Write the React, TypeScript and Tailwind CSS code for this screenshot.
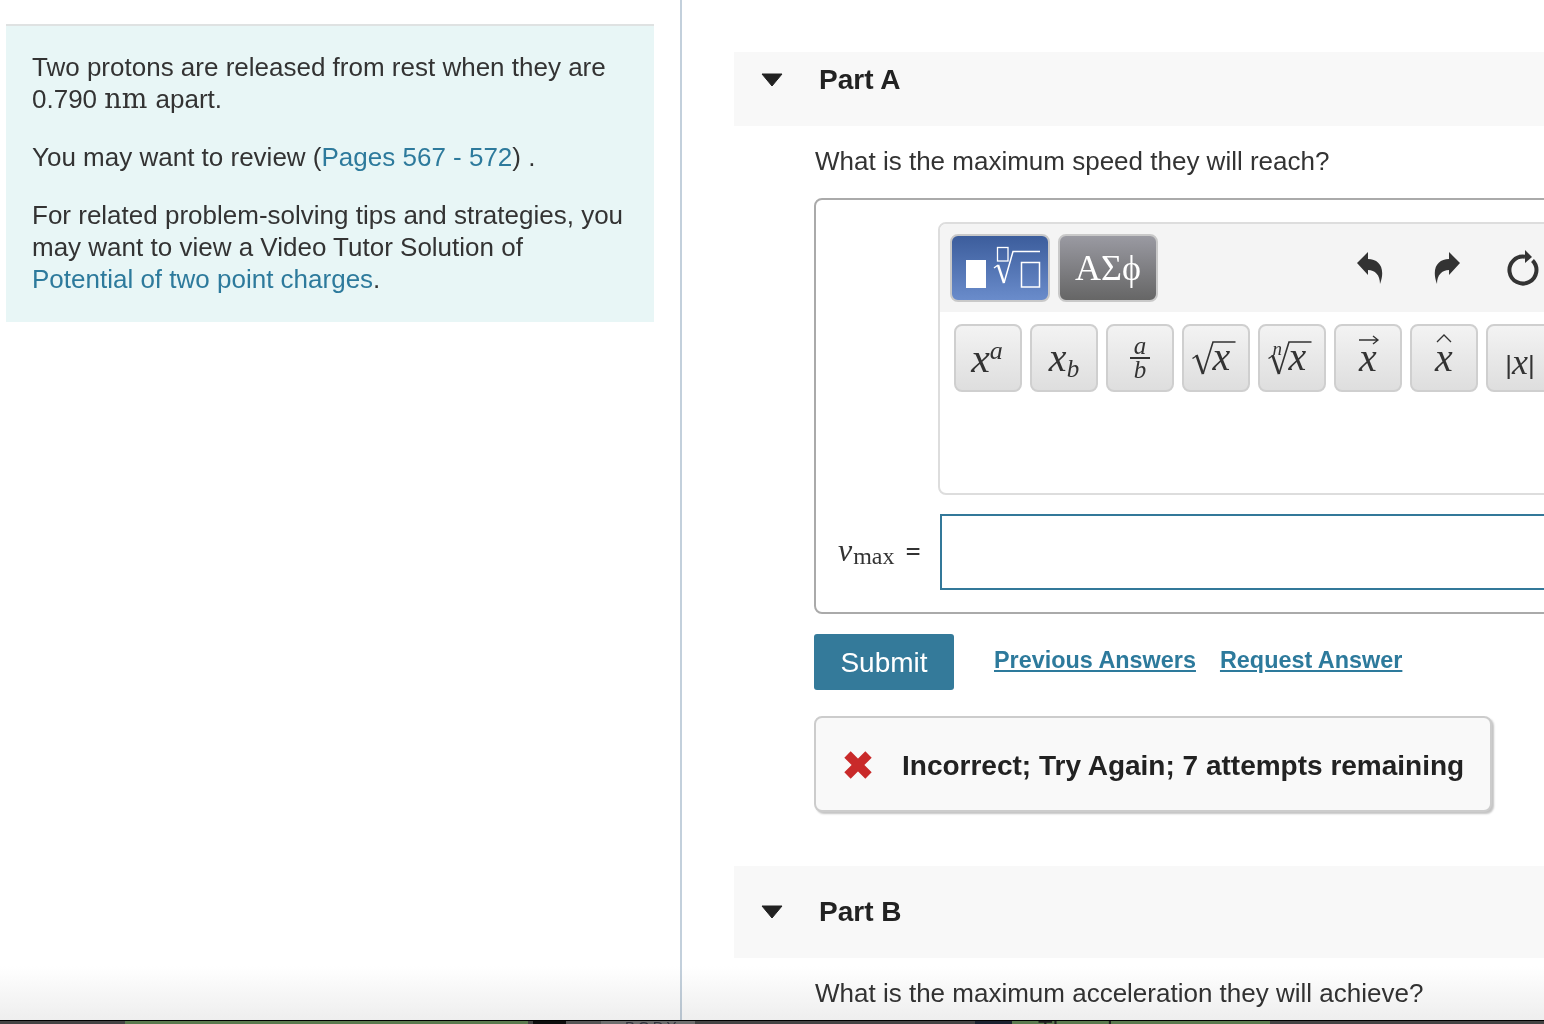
import * as React from "react";

const sans = "font-['Liberation_Sans',Arial,sans-serif]";
const serif = "font-['Liberation_Serif','Times_New_Roman',serif]";

function MathButton({ children }: { children: React.ReactNode }) {
  return (
    <div className={`relative flex h-[68px] w-[68px] shrink-0 items-center justify-center rounded-lg border-2 border-[#cfcfcf] bg-gradient-to-b from-[#f3f3f3] to-[#dedede] text-[#333] ${serif} italic`}>
      {children}
    </div>
  );
}

function Radical({ index }: { index?: boolean }) {
  return (
    <span className="relative mr-[5px] block h-[36px] w-[44px] text-[40px] leading-none">
      {index && <span className="absolute left-[5px] top-[-1px] text-[19px]">n</span>}
      <svg className="absolute left-0 top-0" width="44" height="36" viewBox="0 0 44 36" fill="none" stroke="#333">
        <path d="M0.5 18.5 L5 15.5" strokeWidth="1.3" />
        <path d="M4.5 15 L11 34" strokeWidth="2.6" />
        <path d="M11 34 L21 2 H43.5" strokeWidth="1.6" />
      </svg>
      <span className="absolute left-[21px] top-[-3px]">x</span>
    </span>
  );
}

function Collapse() {
  return (
    <svg width="22" height="14" viewBox="0 0 22 14" className="shrink-0">
      <path d="M1 1 H21 L11 13 Z" fill="#222" stroke="#222" strokeLinejoin="round" />
    </svg>
  );
}

function PartHeader({ title, className }: { title: string; className: string }) {
  return (
    <div className={`flex items-center gap-[36px] bg-[#f8f8f8] pl-[27px] ${className}`}>
      <Collapse />
      <span className="text-[28px] font-bold text-[#222]">{title}</span>
    </div>
  );
}

export default function App() {
  return (
    <div className={`relative flex h-[1024px] w-[1544px] overflow-hidden bg-white ${sans}`}>
      {/* left column */}
      <div className="h-full w-[682px] shrink-0 border-r-2 border-[#c3d0dc] pl-1.5 pt-6">
        <div className="w-[648px] border-t-2 border-[#dfe2e2] bg-[#e8f6f6] px-[26px] pb-[27px] pt-[25px] text-[26px] leading-8 text-[#333]">
          <p>
            Two protons are released from rest when they are
            <br />
            0.790 <span className="mr-px font-['DejaVu_Serif',serif] text-[27px] leading-none">nm</span> apart.
          </p>
          <p className="mt-[26px]">
            You may want to review (<span className="text-[#2d7a9c]">Pages 567 - 572</span>) .
          </p>
          <p className="mt-[26px]">
            For related problem-solving tips and strategies, you
            <br />
            may want to view a Video Tutor Solution of
            <br />
            <span className="text-[#2d7a9c]">Potential of two point charges</span>.
          </p>
        </div>
      </div>

      {/* right column */}
      <div className="min-w-0 flex-1 overflow-hidden pl-[52px] pt-[52px]">
        <PartHeader title="Part A" className="h-[74px] pb-[18px]" />
        <div className="w-[1000px] pl-[80px]">
          <p className="ml-px mt-[19px] text-[26px] leading-8 text-[#333]">What is the maximum speed they will reach?</p>

          <div className="mt-[21px] h-[416px] rounded-lg border-2 border-[#aaa] pl-[122px] pt-[22px]">
            <div className="h-[273px] overflow-hidden rounded-lg border-2 border-[#ddd]">
              <div className="flex h-[88px] items-center bg-[#f4f4f4] pl-[10px]">
                <div className="flex h-[68px] w-[100px] items-center justify-center rounded-lg border-2 border-[#c9c9c9] bg-gradient-to-b from-[#3c5d9c] to-[#6a8ccb]">
                  <svg width="84" height="52" viewBox="0 0 84 52" fill="none" stroke="#fff">
                    <rect x="8" y="18" width="20" height="28" fill="#fff" stroke="none" />
                    <rect x="39.5" y="5.5" width="10.5" height="13.5" strokeWidth="1.3" />
                    <path d="M36 26 L40 23" strokeWidth="1.4" />
                    <path d="M40 23 L46 41" strokeWidth="2.4" />
                    <path d="M46 41 L55 9.5 H82" strokeWidth="1.5" />
                    <rect x="63.5" y="20.5" width="18" height="24.5" strokeWidth="1.5" />
                  </svg>
                </div>
                <div className={`ml-[8px] flex h-[68px] w-[100px] items-center justify-center rounded-lg border-2 border-[#c9c9c9] bg-gradient-to-b from-[#9a9aa2] to-[#666] text-[36px] text-white ${serif}`}>
                  ΑΣϕ
                </div>
                <svg className="ml-[197px]" width="30" height="36" viewBox="0 0 30 36" fill="#333">
                  <path d="M2 13 L13 2 V9 C24 9 31 18 25 34 C25 25 20 20 13 20 V25 Z" />
                </svg>
                <svg className="ml-[47px]" width="30" height="36" viewBox="0 0 30 36" fill="#333">
                  <path d="M28 13 L17 2 V9 C6 9 -1 18 5 34 C5 25 10 20 17 20 V25 Z" />
                </svg>
                <svg className="ml-[44px]" width="34" height="38" viewBox="0 0 34 38" fill="none">
                  <path d="M19 7.7 A13.5 13.5 0 1 0 26.5 11.5" stroke="#333" strokeWidth="4" />
                  <path d="M19 1 L26 8 L19 14 Z" fill="#333" />
                </svg>
              </div>
              <div className="flex gap-2 pl-[14px] pt-[12px]">
                <MathButton>
                  <span className="-ml-[2px] text-[42px] leading-none">x<sup className="text-[26px]">a</sup></span>
                </MathButton>
                <MathButton>
                  <span className="text-[40px] leading-none">x<sub className="text-[25px]">b</sub></span>
                </MathButton>
                <MathButton>
                  <span className="flex flex-col items-center text-[25px] leading-[22px]">
                    <span>a</span>
                    <span className="h-0.5 w-5 bg-[#333]" />
                    <span>b</span>
                  </span>
                </MathButton>
                <MathButton><Radical /></MathButton>
                <MathButton><Radical index /></MathButton>
                <MathButton>
                  <span className="relative text-[40px] leading-none">
                    <svg className="absolute left-[-1px] top-[-3px]" width="22" height="10" viewBox="0 0 22 10" fill="none" stroke="#333" strokeWidth="1.3">
                      <path d="M1 5 H20 M15 1 L20 5 L15 9" />
                    </svg>
                    x
                  </span>
                </MathButton>
                <MathButton>
                  <span className="relative text-[40px] leading-none">
                    <svg className="absolute left-[1px] top-[-5px]" width="16" height="10" viewBox="0 0 16 10" fill="none" stroke="#333" strokeWidth="1.3">
                      <path d="M1 9 L8 2 L15 9" />
                    </svg>
                    x
                  </span>
                </MathButton>
                <MathButton>
                  <span className="pt-2 text-[36px] leading-none"><span className={`not-italic ${sans} text-[26px]`}>|</span>x<span className={`not-italic ${sans} text-[26px]`}>|</span></span>
                </MathButton>
              </div>
            </div>
            <div className="relative ml-[2px] mt-[19px] h-[76px] border-2 border-[#337899]">
              <div className={`absolute left-[-104px] top-[18px] flex items-baseline text-[#333] ${serif}`}>
                <span className="text-[32px] italic leading-8">v</span>
                <span className="relative top-[3px] ml-px text-[24px] leading-8">max</span>
                <span className="ml-[11px] text-[27px] font-bold leading-8">=</span>
              </div>
            </div>
          </div>

          <div className="mt-5 flex items-center">
            <div className="flex h-14 w-[140px] items-center justify-center rounded-[3px] bg-[#347a9a] pt-px text-[28px] text-white">Submit</div>
            <a className="ml-10 -translate-y-[1px] text-[23.4px] font-bold text-[#2d7a9c] underline">Previous Answers</a>
            <a className="ml-6 -translate-y-[1px] text-[23.4px] font-bold text-[#2d7a9c] underline">Request Answer</a>
          </div>

          <div className="mt-[26px] flex h-[96px] w-[678px] items-center rounded-lg border-2 border-[#ccc] bg-[#f9f9f9] pl-[27px] pt-1 shadow-[2px_2px_2px_#c4c4c4]">
            <svg width="30" height="30" viewBox="0 0 30 30" className="-translate-y-[1px]">
              <path d="M4.5 4.5 L25.5 25.5 M25.5 4.5 L4.5 25.5" stroke="#c92a2a" strokeWidth="9" />
            </svg>
            <span className="ml-[29px] text-[28px] font-bold text-[#222]">Incorrect; Try Again; 7 attempts remaining</span>
          </div>
        </div>

        <div className="mt-[54px]">
          <PartHeader title="Part B" className="h-[92px]" />
        </div>
        <p className="ml-[81px] mt-[19px] whitespace-nowrap text-[26px] leading-8 text-[#333]">What is the maximum acceleration they will achieve?</p>
      </div>

      {/* fade and window edge at the bottom of the screen */}
      <div className="pointer-events-none absolute inset-x-0 bottom-1 h-[54px] bg-gradient-to-b from-white to-[#eeeeee] mix-blend-multiply" />
      <div className="absolute inset-x-0 bottom-0 flex h-1 overflow-hidden border-t border-black bg-[#444]">
        <div className="ml-[125px] w-[403px] bg-[#5a7a4e]" />
        <div className="ml-[5px] w-[33px] bg-[#0d0d0d]" />
        <div className="w-[35px] bg-[#555]" />
        <div className="relative w-[94px] bg-[#6e6e6e]">
          <span className="absolute left-[24px] top-[-2px] text-[15px] leading-none tracking-[3px] text-[#34343f]">BODY</span>
        </div>
        <div className="ml-[280px] w-[37px] bg-[#1b2230]" />
        <div className="relative w-[258px] bg-[#5a7a4e]">
          <span className="absolute left-[26px] top-[-3px] text-[24px] leading-none text-[#222]">Thursday</span>
        </div>
      </div>
    </div>
  );
}
